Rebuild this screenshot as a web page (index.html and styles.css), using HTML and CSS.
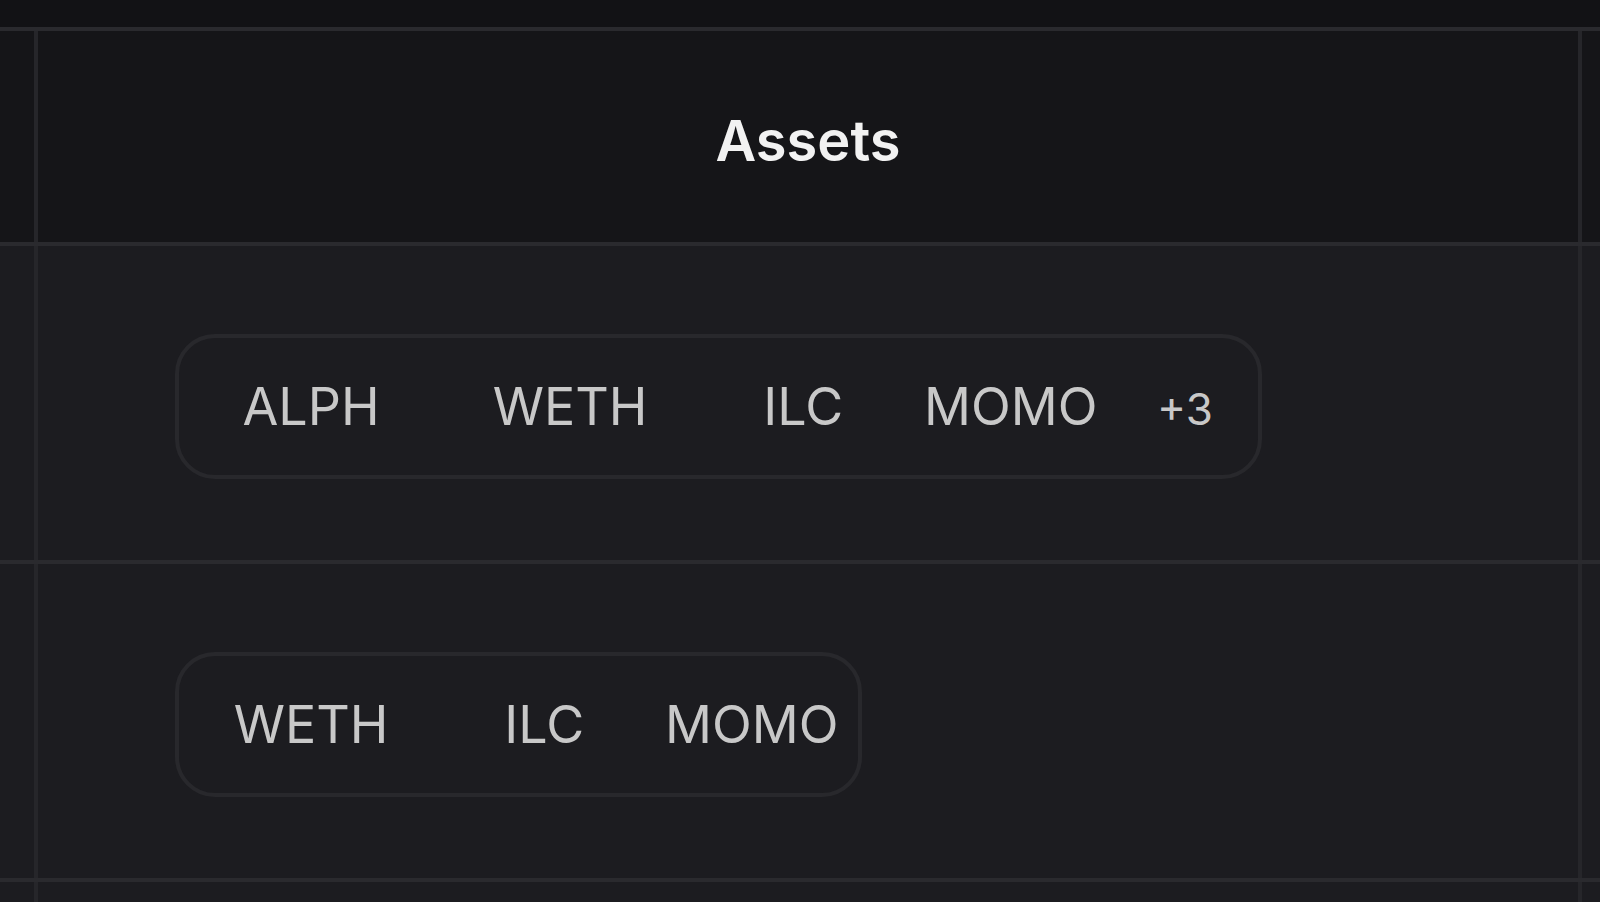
FILE: index.html
```html
<!DOCTYPE html>
<html lang="en">
<head>
<meta charset="utf-8">
<title>Assets</title>
<link rel="stylesheet" href="styles.css">
</head>
<body>
  <div class="topbar"></div>
  <div class="table">
    <div class="row row-head">
      <div class="gutter"></div>
      <div class="cell cell-head">Assets</div>
      <div class="gutter gutter-end"></div>
    </div>
    <div class="row">
      <div class="gutter"></div>
      <div class="cell">
        <div class="pill">
          <span class="token token-lg">ALPH</span>
          <span class="token token-lg">WETH</span>
          <span class="token token-md">ILC</span>
          <span class="token token-md">MOMO</span>
          <span class="token token-more">+3</span>
        </div>
      </div>
      <div class="gutter gutter-end"></div>
    </div>
    <div class="row">
      <div class="gutter"></div>
      <div class="cell">
        <div class="pill">
          <span class="token token-lg">WETH</span>
          <span class="token token-md">ILC</span>
          <span class="token token-md">MOMO</span>
        </div>
      </div>
      <div class="gutter gutter-end"></div>
    </div>
    <div class="row row-tail">
      <div class="gutter"></div>
      <div class="cell cell-tail"></div>
      <div class="gutter gutter-end"></div>
    </div>
  </div>
</body>
</html>
```

FILE: styles.css
```css
* {
  box-sizing: border-box;
}

html, body {
  margin: 0;
  padding: 0;
  height: 100%;
  overflow: hidden;
}

body {
  background: #1c1c20;
  font-family: Inter, "Noto Sans", "Liberation Sans", sans-serif;
  color: #c8c8c8;
}

.topbar {
  height: 27px;
  background: #121215;
}

.table {
  border-top: 4px solid #2a2a2e;
  display: flex;
  flex-direction: column;
}

.row {
  display: flex;
  background: #1c1c20;
  border-bottom: 4px solid #2a2a2e;
}

.row-head {
  background: #151518;
}

.row-tail {
  border-bottom: none;
  height: 40px;
}

.gutter {
  width: 34px;
  flex: none;
}

.gutter-end {
  flex: 1;
}

.cell {
  width: 1548px;
  flex: none;
  border-left: 4px solid #26262a;
  border-right: 4px solid #26262a;
  padding: 88px 0 81px 137px;
  display: flex;
}

.cell-head {
  height: 211px;
  padding: 8px 0 0 0;
  justify-content: center;
  align-items: center;
  font-size: 56px;
  font-weight: 600;
  color: #f2f2f2;
}

.cell-tail {
  padding: 0;
}

.pill {
  display: flex;
  align-items: baseline;
  border: 4px solid #28282c;
  border-radius: 40px;
  padding: 0 2.5px;
  height: 145px;
}

.token {
  flex: none;
  text-align: center;
  font-size: 52px;
  line-height: 137px;
  color: #c8c8c8;
}

.token-lg {
  width: 259px;
}

.token-md {
  width: 207.5px;
}

.token-more {
  width: 141px;
  font-size: 44px;
}
```
